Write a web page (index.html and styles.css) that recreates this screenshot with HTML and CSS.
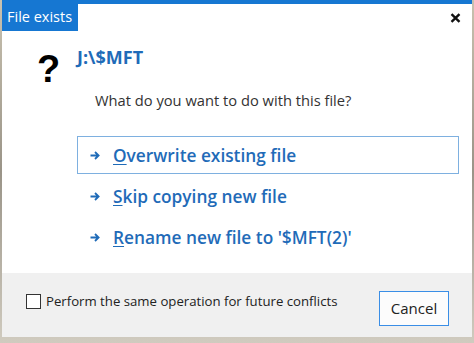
FILE: index.html
```html
<!DOCTYPE html>
<html>
<head>
<meta charset="utf-8">
<link rel="stylesheet" href="styles.css">
</head>
<body>
<div class="desk">
  <div class="dialog">
    <div class="titlebar">
      <div class="tab">File exists</div>
      <svg class="close" width="11" height="10" viewBox="0 0 11 10"><path d="M1.5 1.2 L9.5 8.8 M9.5 1.2 L1.5 8.8" stroke="#111" stroke-width="2.4" fill="none"/></svg>
    </div>
    <div class="content">
      <div class="qicon">?</div>
      <div class="main">
        <div class="heading">J:\$MFT</div>
        <div class="question">What do you want to do with this file?</div>
        <div class="options">
          <div class="option selected"><svg class="arrow" width="10" height="9" viewBox="0 0 10 9"><path d="M0.5 4.5 H8.5 M5 1 L8.6 4.5 L5 8" stroke="#1f6bb8" stroke-width="1.8" fill="none"/></svg><span class="label"><u>O</u>verwrite existing file</span></div>
          <div class="option"><svg class="arrow" width="10" height="9" viewBox="0 0 10 9"><path d="M0.5 4.5 H8.5 M5 1 L8.6 4.5 L5 8" stroke="#1f6bb8" stroke-width="1.8" fill="none"/></svg><span class="label"><u>S</u>kip copying new file</span></div>
          <div class="option"><svg class="arrow" width="10" height="9" viewBox="0 0 10 9"><path d="M0.5 4.5 H8.5 M5 1 L8.6 4.5 L5 8" stroke="#1f6bb8" stroke-width="1.8" fill="none"/></svg><span class="label"><u>R</u>ename new file to '$MFT(2)'</span></div>
        </div>
      </div>
    </div>
    <div class="footer">
      <label class="check"><span class="box"></span><span>Perform the same operation for future conflicts</span></label>
      <button class="cancel">Cancel</button>
    </div>
  </div>
</div>
</body>
</html>
```
FILE: styles.css
```css
html, body {
  margin: 0;
  padding: 0;
}
body {
  width: 474px;
  height: 343px;
  overflow: hidden;
  font-family: "Open Sans", "Noto Sans", sans-serif;
  background: linear-gradient(90deg, #6b5a3c 0%, #2a2a2a 20%, #8a8070 40%, #5c7a2a 55%, #444 70%, #9a9a9a 100%);
}
.desk {
  padding: 0 2px 6px 2px;
  background: linear-gradient(180deg, #c9c2b0 0%, #9a9488 50%, #d0cbbf 100%);
  height: 337px;
}
.dialog {
  width: 470px;
  height: 337px;
  background: #fff;
  display: flex;
  flex-direction: column;
}
.titlebar {
  height: 31px;
  display: flex;
  align-items: flex-start;
  justify-content: space-between;
  border-top: 4px solid #1677d2;
  box-sizing: border-box;
}
.tab {
  background: #1677d2;
  color: #fff;
  font-size: 14.5px;
  height: 27px;
  line-height: 25px;
  padding: 0 6px 0 5px;
  margin-top: -4px;
  padding-top: 4px;
  box-sizing: content-box;
}
.close {
  display: block;
  margin: 9px 11px 0 0;
}
.content {
  flex: 1;
  display: flex;
  padding-left: 34px;
}
.qicon {
  width: 41px;
  font-family: "Liberation Sans", sans-serif;
  font-weight: 700;
  font-size: 38px;
  color: #000;
  line-height: 38px;
  margin-top: 19px;
  padding-left: 1px;
  box-sizing: border-box;
}
.main {
  flex: 1;
  padding-right: 13px;
}
.heading {
  color: #1f6bb8;
  font-weight: 700;
  font-size: 18px;
  line-height: 22px;
  margin-top: 15px;
}
.question {
  color: #333;
  font-size: 14.7px;
  line-height: 20px;
  margin: 22px 0 0 18px;
}
.options {
  margin-top: 26px;
  display: flex;
  flex-direction: column;
  gap: 3px;
}
.option {
  height: 38px;
  box-sizing: border-box;
  border: 1px solid transparent;
  display: flex;
  align-items: center;
  padding-left: 12px;
  color: #1f6bb8;
  font-size: 17.3px;
  font-weight: 600;
}
.option.selected {
  border-color: #7eb0e0;
}
.arrow {
  display: block;
  margin-right: 13px;
  margin-top: 1px;
}
.label u {
  text-decoration-thickness: 1px;
  text-underline-offset: 2px;
}
.footer {
  height: 64px;
  background: #f0f0f0;
  display: flex;
  align-items: center;
  justify-content: space-between;
  padding: 0 23px 2px 24px;
  box-sizing: border-box;
}
.check {
  display: flex;
  align-items: center;
  gap: 5px;
  color: #222;
  font-size: 13.2px;
  margin-top: -6px;
}
.box {
  width: 13px;
  height: 13px;
  border: 1px solid #333;
  background: #fff;
}
.cancel {
  width: 70px;
  height: 35px;
  border: 1px solid #3a8ee6;
  background: #fcfcfc;
  font-family: "Open Sans", "Noto Sans", sans-serif;
  font-size: 15px;
  color: #222;
  padding: 0;
  margin-top: 8px;
}
```
